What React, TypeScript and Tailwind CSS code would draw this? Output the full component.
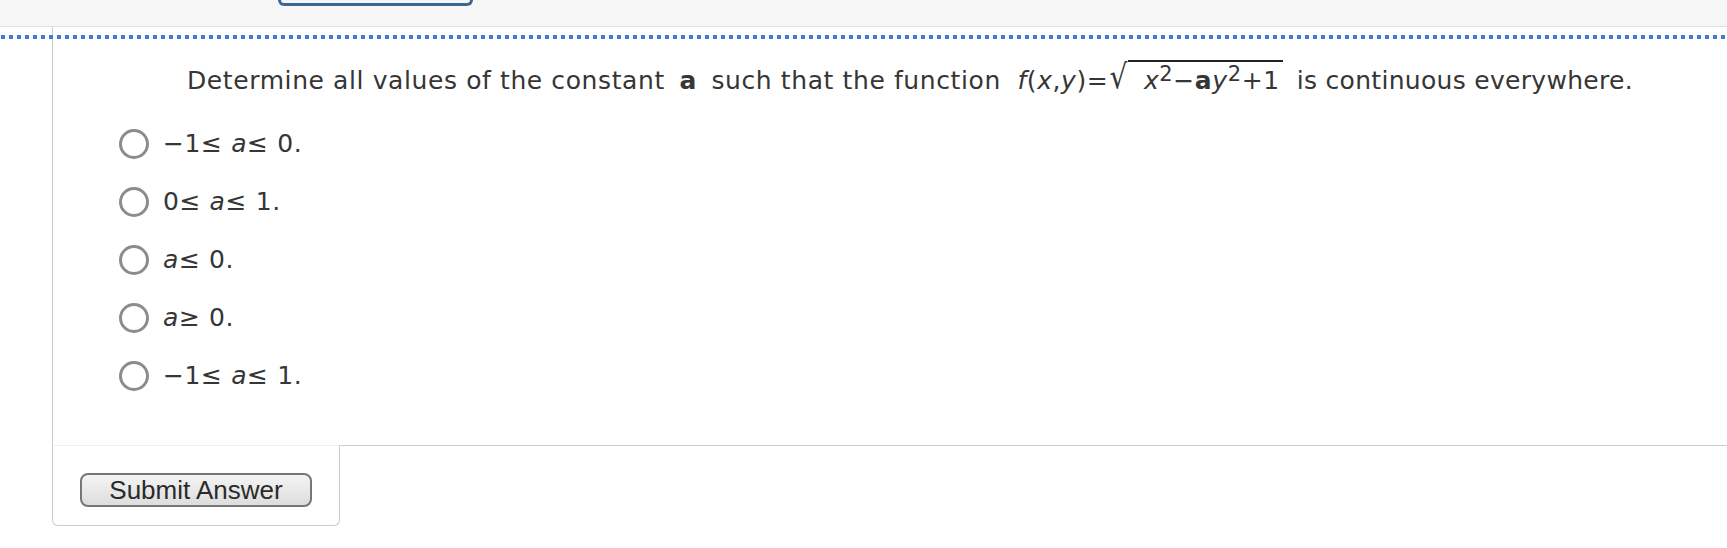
const options = [
  { lo: '−1≤ ', hi: '≤ 0.' },
  { lo: '0≤ ', hi: '≤ 1.' },
  { lo: '', hi: '≤ 0.' },
  { lo: '', hi: '≥ 0.' },
  { lo: '−1≤ ', hi: '≤ 1.' },
];

const Radio = () => (
  <span className="w-[30px] h-[30px] rounded-full border-[3px] border-[#8c8c8c] bg-white shrink-0" />
);

export default function App() {
  return (
    <div className="w-[1727px] h-[548px] overflow-hidden bg-white text-[#363636] font-['DejaVu_Sans',Verdana,sans-serif]">
      {/* top strip with the cut-off tab */}
      <div className="h-[27px] bg-[#f6f6f6] border-b border-[#e0e0e0] pl-[278px]">
        <div className="w-[195px] h-[6px] border-x-[3px] border-b-[3px] border-[#3b6797] rounded-b-[7px]" />
      </div>

      <div className="ml-[52px] h-[8px] border-l border-[#cccccc]" />
      <div className="h-[4px] bg-[repeating-linear-gradient(90deg,transparent_0_1px,#3a7fd5_1px_5px,transparent_5px_9px)] bg-[length:8px_4px]" />

      <div className="ml-[52px]">
        <div className="border-l border-[#cccccc] pt-[23px] pb-[40px]">
          <p className="pl-[134px] text-[25px] tracking-[0.6px] leading-[38px] whitespace-nowrap">
            Determine all values of the constant <b className="mx-[6px]">a</b> such that the function{' '}
            <span className="ml-[8px]">
              <i>f</i>(<i>x</i>,<i>y</i>)=
              <span className="inline-block text-[28px] leading-[28px] scale-y-[1.2] origin-bottom ml-[1px]">√</span>
              <span className="inline-block border-t-2 border-[#222] leading-[30px] pt-[4px] pl-[16px] pr-[3px] -mt-[4px]">
                <i>x</i>
                <sup className="text-[21px] top-[-8px]">2</sup>−<b>a</b>
                <i>y</i>
                <sup className="text-[21px] top-[-8px]">2</sup>+1
              </span>
            </span>
            <span className="ml-[14px] tracking-[0.3px]">is continuous everywhere.</span>
          </p>

          <div className="mt-[15px] pl-[66px] flex flex-col">
            {options.map((o, i) => (
              <div key={i} className="h-[58px] flex items-center gap-[14px] text-[25px] tracking-[0.6px]">
                <Radio />
                <span>
                  {o.lo}
                  <i>a</i>
                  {o.hi}
                </span>
              </div>
            ))}
          </div>
        </div>

        <div className="flex">
          <div className="w-[288px] h-[81px] border-l border-r border-b border-[#cccccc] border-t border-t-[#f0f0f0] rounded-b-[6px] pl-[27px] pt-[27px]">
            <button className="w-[232px] h-[34px] rounded-[8px] border-2 border-[#767676] bg-[linear-gradient(#f4f4f4,#dddddd)] text-[26px] leading-none text-[#2b2b2b] font-['Liberation_Sans',Arial,sans-serif]">
              Submit Answer
            </button>
          </div>
          <div className="flex-1 border-t border-[#cccccc]" />
        </div>
      </div>
    </div>
  );
}
